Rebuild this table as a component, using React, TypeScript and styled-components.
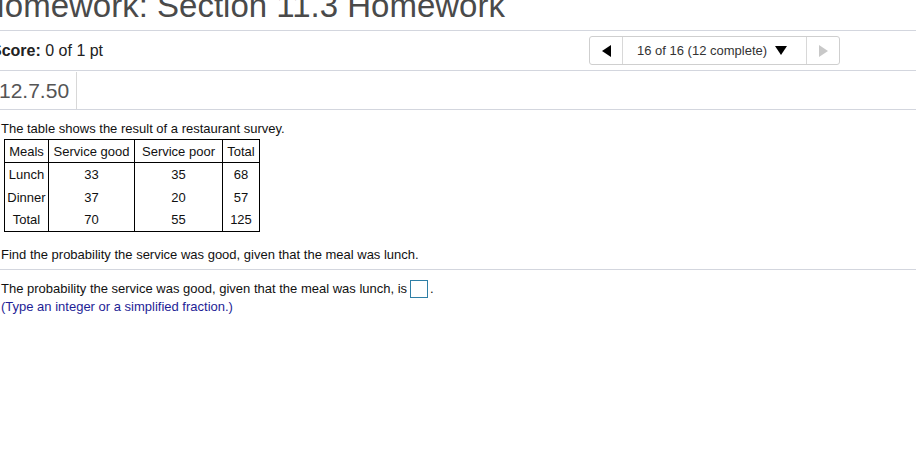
import React from "react";
import styled, { createGlobalStyle } from "styled-components";

const GlobalStyle = createGlobalStyle`
  html, body {
    margin: 0;
    padding: 0;
    background: #fff;
    overflow: hidden;
  }
  body {
    font-family: "Liberation Sans", Arial, Helvetica, sans-serif;
    color: #222;
  }
`;

const Page = styled.div`
  width: 916px;
  height: 466px;
  overflow: hidden;
`;

const TitleBar = styled.div`
  display: flow-root;
  height: 31px;
  box-sizing: border-box;
  border-bottom: 1px solid #d3d6de;
`;

const Title = styled.h1`
  margin: -9px 0 0 -19px;
  font-size: 33px;
  line-height: 30px;
  font-weight: normal;
  color: #4a4a4a;
  white-space: nowrap;
`;

const ScoreBar = styled.div`
  height: 40px;
  box-sizing: border-box;
  border-bottom: 1px solid #d3d6de;
  display: flex;
  align-items: center;
  justify-content: space-between;
  padding-right: 76px;
`;

const Score = styled.div`
  margin-left: -9px;
  font-size: 16px;
  color: #222;
  b {
    font-weight: bold;
  }
`;

const Nav = styled.div`
  display: flex;
  height: 29px;
  box-sizing: border-box;
  border: 1px solid #cfcfcf;
  border-radius: 3px;
  background: #fff;
`;

const NavCell = styled.div<{ $w: number; $last?: boolean }>`
  display: flex;
  align-items: center;
  justify-content: center;
  width: ${(p) => p.$w}px;
  border-right: ${(p) => (p.$last ? "none" : "1px solid #d8d8d8")};
  box-sizing: border-box;
`;

const NavText = styled.div`
  display: flex;
  align-items: center;
  gap: 8px;
  width: 184px;
  box-sizing: border-box;
  padding-left: 14px;
  font-size: 13px;
  color: #333;
  border-right: 1px solid #d8d8d8;
  white-space: nowrap;
`;

const Tri = styled.span<{ $dir: "left" | "right" | "down"; $color: string }>`
  width: 0;
  height: 0;
  border-style: solid;
  ${(p) =>
    p.$dir === "left"
      ? `border-width: 6px 9px 6px 0; border-color: transparent ${p.$color} transparent transparent;`
      : p.$dir === "right"
      ? `border-width: 6px 0 6px 9px; border-color: transparent transparent transparent ${p.$color};`
      : `border-width: 9px 6px 0 6px; border-color: ${p.$color} transparent transparent transparent;`}
`;

const IdBar = styled.div`
  height: 39px;
  box-sizing: border-box;
  border-bottom: 1px solid #d3d6de;
  display: flex;
`;

const QuestionId = styled.div`
  display: flex;
  align-items: center;
  padding: 0 7px 0 0;
  margin-left: -1px;
  font-size: 21px;
  color: #555;
  border-right: 1px solid #d8d8d8;
  margin-top: 1px;
`;

const Body = styled.div`
  padding: 11px 0 0 1px;
  font-size: 13px;
  color: #111;
`;

const Para = styled.div`
  line-height: 15px;
`;

const SurveyTable = styled.table`
  border-collapse: collapse;
  border: 1px solid #000;
  margin: 3px 0 0 3px;
  font-size: 13px;
  td {
    height: 23px;
    padding: 0;
    text-align: center;
    border-left: 1px solid #000;
    border-right: 1px solid #000;
    box-sizing: border-box;
  }
  thead td {
    border-bottom: 1px solid #000;
  }
`;

const Question = styled.div`
  margin-top: 15px;
  padding-bottom: 7px;
  margin-left: -1px;
  padding-left: 1px;
  line-height: 15px;
  border-bottom: 1px solid #d3d6de;
`;

const Answer = styled.div`
  margin-top: 9px;
  line-height: 20px;
  display: flex;
  align-items: center;
`;

const AnswerBox = styled.span`
  display: inline-block;
  width: 18px;
  height: 18px;
  box-sizing: border-box;
  border: 1.5px solid #2f7fa6;
  margin: 0 2px 0 3px;
`;

const Hint = styled.div`
  color: #1e1e96;
  line-height: 16px;
  margin-top: 0;
`;

const rows = [
  ["Lunch", "33", "35", "68"],
  ["Dinner", "37", "20", "57"],
  ["Total", "70", "55", "125"],
];

const widths = [44, 86, 88, 37];

export default function App() {
  return (
    <Page>
      <GlobalStyle />
      <TitleBar>
        <Title>Homework: Section 11.3 Homework</Title>
      </TitleBar>
      <ScoreBar>
        <Score>
          <b>Score:</b> 0 of 1 pt
        </Score>
        <Nav>
          <NavCell $w={33}>
            <Tri $dir="left" $color="#000" />
          </NavCell>
          <NavText>
            16 of 16 (12 complete)
            <Tri $dir="down" $color="#000" />
          </NavText>
          <NavCell $w={32} $last>
            <Tri $dir="right" $color="#c8c8c8" />
          </NavCell>
        </Nav>
      </ScoreBar>
      <IdBar>
        <QuestionId>12.7.50</QuestionId>
      </IdBar>
      <Body>
        <Para>The table shows the result of a restaurant survey.</Para>
        <SurveyTable>
          <colgroup>
            {widths.map((w, i) => (
              <col key={i} style={{ width: w }} />
            ))}
          </colgroup>
          <thead>
            <tr>
              <td>Meals</td>
              <td>Service good</td>
              <td>Service poor</td>
              <td>Total</td>
            </tr>
          </thead>
          <tbody>
            {rows.map((r) => (
              <tr key={r[0]}>
                {r.map((c, i) => (
                  <td key={i}>{c}</td>
                ))}
              </tr>
            ))}
          </tbody>
        </SurveyTable>
        <Question>
          Find the probability the service was good, given that the meal was lunch.
        </Question>
        <Answer>
          The probability the service was good, given that the meal was lunch, is
          <AnswerBox />.
        </Answer>
        <Hint>(Type an integer or a simplified fraction.)</Hint>
      </Body>
    </Page>
  );
}
